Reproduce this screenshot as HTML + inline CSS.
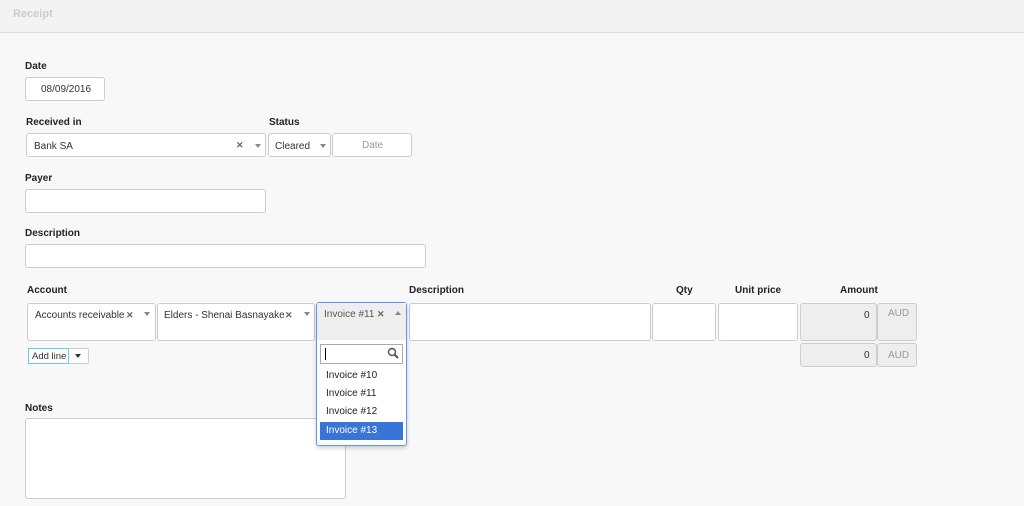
<!DOCTYPE html><html><head><style>
body{margin:0;width:1024px;height:506px;background:#f8f8f8;font-family:"Liberation Sans",Arial,sans-serif;font-size:10px;color:#333;position:relative;overflow:hidden}
div,span{position:absolute;box-sizing:border-box;white-space:nowrap}
.hdr{left:0;top:0;width:1024px;height:33px;background:#f3f3f3;border-bottom:1px solid #ddd}
.lbl{font-weight:bold;font-size:10px;color:#222}
.in{background:#fff;border:1px solid #ccc;border-radius:3px}
.x{font-size:9px;color:#666;font-weight:bold}
.ar{width:0;height:0;border-left:3px solid transparent;border-right:3px solid transparent;border-top:4px solid #888}
.g{background:#eee;border:1px solid #ccc;border-radius:3px}
</style></head><body>
<div class="hdr"><span style="left:13px;top:8px;font-size:11px;font-weight:bold;color:#ccc">Receipt</span></div>
<span class="lbl" style="left:25px;top:61px">Date</span>
<div class="in" style="left:25px;top:77px;width:80px;height:24px"><span style="left:15px;top:6px">08/09/2016</span></div>
<span class="lbl" style="left:26px;top:117px">Received in</span>
<span class="lbl" style="left:269px;top:117px">Status</span>
<div class="in" style="left:26px;top:133px;width:240px;height:24px"><span style="left:7px;top:7px">Bank SA</span><span class="x" style="left:209px;top:6px">✕</span><span class="ar" style="left:228px;top:10px"></span></div>
<div class="in" style="left:268px;top:133px;width:63px;height:24px"><span style="left:6px;top:7px">Cleared</span><span class="ar" style="left:51px;top:10px"></span></div>
<div class="in" style="left:332px;top:133px;width:80px;height:24px"><span style="left:29px;top:6px;color:#999">Date</span></div>
<span class="lbl" style="left:25px;top:173px">Payer</span>
<div class="in" style="left:25px;top:189px;width:241px;height:24px"></div>
<span class="lbl" style="left:25px;top:228px">Description</span>
<div class="in" style="left:25px;top:244px;width:401px;height:24px"></div>
<span class="lbl" style="left:27px;top:285px">Account</span>
<span class="lbl" style="left:409px;top:285px">Description</span>
<span class="lbl" style="left:676px;top:285px">Qty</span>
<span class="lbl" style="left:735px;top:285px">Unit price</span>
<span class="lbl" style="left:840px;top:285px">Amount</span>
<div class="in" style="left:27px;top:303px;width:129px;height:38px"><span style="left:7px;top:6px">Accounts receivable</span><span class="x" style="left:98px;top:6px">✕</span><span class="ar" style="left:116px;top:8px"></span></div>
<div class="in" style="left:157px;top:303px;width:158px;height:38px"><span style="left:6px;top:6px">Elders - Shenai Basnayake</span><span class="x" style="left:127px;top:6px">✕</span><span class="ar" style="left:146px;top:8px"></span></div>
<div class="in" style="left:409px;top:303px;width:242px;height:38px"></div>
<div class="in" style="left:652px;top:303px;width:64px;height:38px"></div>
<div class="in" style="left:718px;top:303px;width:80px;height:38px"></div>
<div class="g" style="left:800px;top:303px;width:77px;height:38px"><span style="left:63px;top:6px">0</span></div>
<div class="g" style="left:877px;top:303px;width:40px;height:38px"><span style="left:10px;top:4px;color:#999">AUD</span></div>
<div class="g" style="left:800px;top:343px;width:77px;height:24px"><span style="left:63px;top:6px">0</span></div>
<div class="g" style="left:877px;top:343px;width:40px;height:24px"><span style="left:10px;top:6px;color:#999">AUD</span></div>
<div style="left:28px;top:348px;width:61px;height:16px;background:#fff;border:1px solid #ccc;border-radius:2px"></div>
<div style="left:28px;top:348px;width:41px;height:16px;border:1px solid #66ccee;background:#fff"></div>
<span style="left:32px;top:351px;font-size:9.5px">Add line</span>
<span style="left:75px;top:354px;width:0;height:0;border-left:3px solid transparent;border-right:3px solid transparent;border-top:4px solid #333"></span>
<span class="lbl" style="left:25px;top:403px">Notes</span>
<div class="in" style="left:25px;top:418px;width:321px;height:81px"></div>
<div style="left:316px;top:302px;width:91px;height:144px;background:#fff;border:1px solid #5897fb;border-radius:3px;box-shadow:0 2px 4px rgba(0,0,0,.2)"></div>
<div style="left:317px;top:303px;width:89px;height:37px;background:#eee"></div>
<span style="left:324px;top:309px;color:#555">Invoice #11</span>
<span class="x" style="left:377px;top:309px">✕</span>
<span style="left:395px;top:311px;width:0;height:0;border-left:3px solid transparent;border-right:3px solid transparent;border-bottom:4px solid #888"></span>
<div style="left:320px;top:344px;width:83px;height:20px;border:1px solid #aaa;background:#fff"></div>
<span style="left:325px;top:348px;width:1px;height:12px;background:#000"></span>
<svg style="position:absolute;left:387px;top:347px" width="12" height="12"><circle cx="5" cy="5" r="3.5" fill="none" stroke="#555" stroke-width="1.5"/><line x1="7.5" y1="7.5" x2="11" y2="11" stroke="#555" stroke-width="2"/></svg>
<span style="left:326px;top:370px;color:#222">Invoice #10</span>
<span style="left:326px;top:388px;color:#222">Invoice #11</span>
<span style="left:326px;top:406px;color:#222">Invoice #12</span>
<div style="left:320px;top:422px;width:83px;height:18px;background:#3875d7"></div>
<span style="left:326px;top:425px;color:#fff">Invoice #13</span>
</body></html>
